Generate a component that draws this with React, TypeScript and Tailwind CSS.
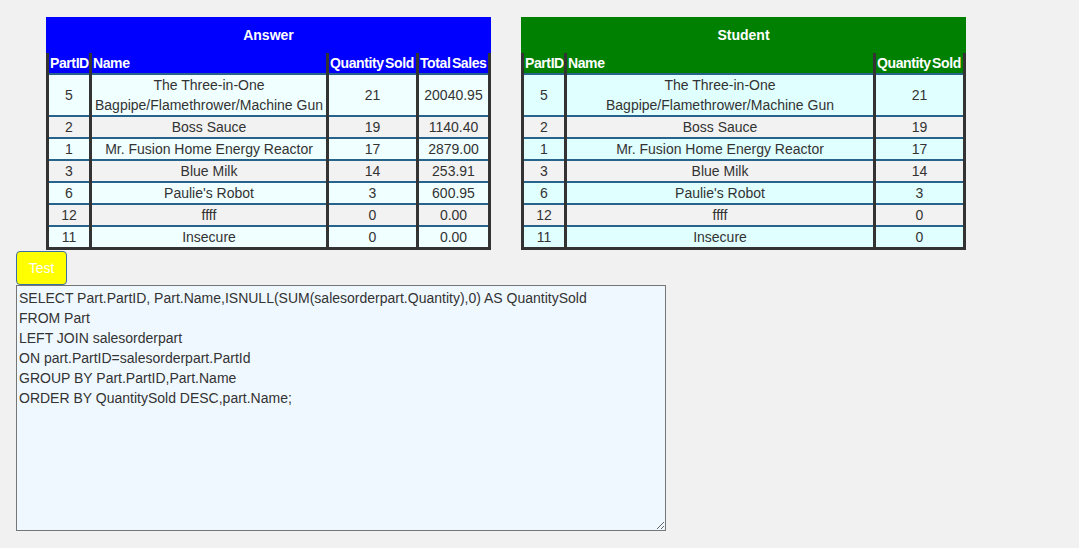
import React from "react";

type Row = { id: number; name: string; qty: number; total: string };

const rows: Row[] = [
  { id: 5, name: "The Three-in-One Bagpipe/Flamethrower/Machine Gun", qty: 21, total: "20040.95" },
  { id: 2, name: "Boss Sauce", qty: 19, total: "1140.40" },
  { id: 1, name: "Mr. Fusion Home Energy Reactor", qty: 17, total: "2879.00" },
  { id: 3, name: "Blue Milk", qty: 14, total: "253.91" },
  { id: 6, name: "Paulie's Robot", qty: 3, total: "600.95" },
  { id: 12, name: "ffff", qty: 0, total: "0.00" },
  { id: 11, name: "Insecure", qty: 0, total: "0.00" },
];

const query = `SELECT Part.PartID, Part.Name,ISNULL(SUM(salesorderpart.Quantity),0) AS QuantitySold
FROM Part
LEFT JOIN salesorderpart
ON part.PartID=salesorderpart.PartId
GROUP BY Part.PartID,Part.Name
ORDER BY QuantitySold DESC,part.Name;`;

function ResultTable({
  title,
  headBg,
  oddBg,
  showTotal,
}: {
  title: string;
  headBg: string;
  oddBg: string;
  showTotal: boolean;
}) {
  const cols = showTotal ? "grid-cols-[40px_234px_87px_69px]" : "grid-cols-[40px_306px_87px]";
  const th = `${headBg} border-b-2 border-[#27638b] pl-px text-[14px] font-bold leading-5 tracking-[-0.4px] [word-spacing:-2px] text-white whitespace-nowrap overflow-hidden`;
  return (
    <div className="w-[445px]">
      <div className={`${headBg} flex h-[36px] items-center justify-center pt-px text-[14px] font-bold text-white`}>
        {title}
      </div>
      <div className={`grid ${cols} gap-x-[3px] bg-[#333] px-[3px] pb-[3px]`}>
        <div className={th}>PartID</div>
        <div className={th}>Name</div>
        <div className={th}>Quantity Sold</div>
        {showTotal && <div className={th}>Total Sales</div>}
        {rows.map((r, i) => {
          const bg = i % 2 === 0 ? oddBg : "bg-[#f2f2f2]";
          const line = i === rows.length - 1 ? "" : "border-b-2 border-[#27638b]";
          const td = `${bg} ${line} flex items-center justify-center text-center text-[14px] leading-5 text-[#333]`;
          return (
            <React.Fragment key={r.id}>
              <div className={td}>{r.id}</div>
              <div className={td}>{r.name}</div>
              <div className={td}>{r.qty}</div>
              {showTotal && <div className={td}>{r.total}</div>}
            </React.Fragment>
          );
        })}
      </div>
    </div>
  );
}

export default function App() {
  return (
    <div className="min-h-[548px] bg-[#f1f1f1] font-['Liberation_Sans',Arial,sans-serif]">
      <div className="flex gap-[30px] pl-[46px] pt-[17px]">
        <ResultTable title="Answer" headBg="bg-[#0000ff]" oddBg="bg-[#f0ffff]" showTotal />
        <ResultTable title="Student" headBg="bg-[#008000]" oddBg="bg-[#e0ffff]" showTotal={false} />
      </div>
      <div className="flex flex-col items-start pl-[16px] pt-[1px]">
        <button className="h-[34px] w-[51px] rounded-[4px] border border-[#3c6fa3] bg-[#ffff00] text-[14px] text-white">
          Test
        </button>
        <textarea
          defaultValue={query}
          className="h-[246px] w-[650px] border border-[#767676] bg-[#f0f8ff] p-[2px] font-['Liberation_Sans',Arial,sans-serif] text-[14px] leading-5 text-[#333] outline-none"
        />
      </div>
    </div>
  );
}
